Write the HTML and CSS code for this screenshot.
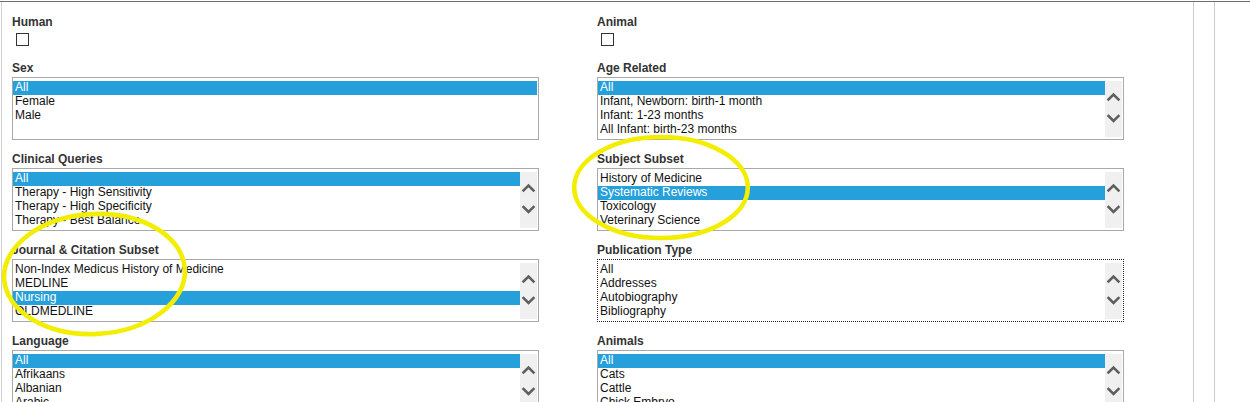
FILE: index.html
```html
<!DOCTYPE html>
<html lang="en">
<head>
<meta charset="utf-8">
<title>Limits</title>
<link rel="stylesheet" href="styles.css">
</head>
<body>
<div class="frame">
  <div class="main">
    <div class="grid">
      <div class="field">
        <span class="label">Human</span>
        <span class="checkbox"></span>
      </div>
      <div class="field">
        <span class="label">Animal</span>
        <span class="checkbox"></span>
      </div>

      <div class="field">
        <span class="label">Sex</span>
        <div class="listbox">
          <ul class="options">
            <li class="opt sel">All</li>
            <li class="opt">Female</li>
            <li class="opt">Male</li>
          </ul>
        </div>
      </div>
      <div class="field">
        <span class="label">Age Related</span>
        <div class="listbox">
          <ul class="options">
            <li class="opt sel">All</li>
            <li class="opt">Infant, Newborn: birth-1 month</li>
            <li class="opt">Infant: 1-23 months</li>
            <li class="opt">All Infant: birth-23 months</li>
          </ul>
          <div class="scrollbar"><svg width="17" height="56" viewBox="0 0 17 56"><path class="chev" d="M3.5 18.5 L8.5 13.5 L13.5 18.5"/><path class="chev" d="M3.5 35 L8.5 40 L13.5 35"/></svg></div>
        </div>
      </div>

      <div class="field">
        <span class="label">Clinical Queries</span>
        <div class="listbox">
          <ul class="options">
            <li class="opt sel">All</li>
            <li class="opt">Therapy - High Sensitivity</li>
            <li class="opt">Therapy - High Specificity</li>
            <li class="opt">Therapy - Best Balance</li>
          </ul>
          <div class="scrollbar"><svg width="17" height="56" viewBox="0 0 17 56"><path class="chev" d="M3.5 18.5 L8.5 13.5 L13.5 18.5"/><path class="chev" d="M3.5 35 L8.5 40 L13.5 35"/></svg></div>
        </div>
      </div>
      <div class="field">
        <span class="label">Subject Subset</span>
        <div class="listbox">
          <ul class="options">
            <li class="opt">History of Medicine</li>
            <li class="opt sel">Systematic Reviews</li>
            <li class="opt">Toxicology</li>
            <li class="opt">Veterinary Science</li>
          </ul>
          <div class="scrollbar"><svg width="17" height="56" viewBox="0 0 17 56"><path class="chev" d="M3.5 18.5 L8.5 13.5 L13.5 18.5"/><path class="chev" d="M3.5 35 L8.5 40 L13.5 35"/></svg></div>
        </div>
      </div>

      <div class="field">
        <span class="label">Journal &amp; Citation Subset</span>
        <div class="listbox">
          <ul class="options">
            <li class="opt">Non-Index Medicus History of Medicine</li>
            <li class="opt">MEDLINE</li>
            <li class="opt sel">Nursing</li>
            <li class="opt">OLDMEDLINE</li>
          </ul>
          <div class="scrollbar"><svg width="17" height="56" viewBox="0 0 17 56"><path class="chev" d="M3.5 18.5 L8.5 13.5 L13.5 18.5"/><path class="chev" d="M3.5 35 L8.5 40 L13.5 35"/></svg></div>
        </div>
      </div>
      <div class="field">
        <span class="label">Publication Type</span>
        <div class="listbox focused">
          <ul class="options">
            <li class="opt">All</li>
            <li class="opt">Addresses</li>
            <li class="opt">Autobiography</li>
            <li class="opt">Bibliography</li>
          </ul>
          <div class="scrollbar"><svg width="17" height="56" viewBox="0 0 17 56"><path class="chev" d="M3.5 18.5 L8.5 13.5 L13.5 18.5"/><path class="chev" d="M3.5 35 L8.5 40 L13.5 35"/></svg></div>
        </div>
      </div>

      <div class="field">
        <span class="label">Language</span>
        <div class="listbox">
          <ul class="options">
            <li class="opt sel">All</li>
            <li class="opt">Afrikaans</li>
            <li class="opt">Albanian</li>
            <li class="opt">Arabic</li>
          </ul>
          <div class="scrollbar"><svg width="17" height="56" viewBox="0 0 17 56"><path class="chev" d="M3.5 18.5 L8.5 13.5 L13.5 18.5"/><path class="chev" d="M3.5 35 L8.5 40 L13.5 35"/></svg></div>
        </div>
      </div>
      <div class="field">
        <span class="label">Animals</span>
        <div class="listbox">
          <ul class="options">
            <li class="opt sel">All</li>
            <li class="opt">Cats</li>
            <li class="opt">Cattle</li>
            <li class="opt">Chick Embryo</li>
          </ul>
          <div class="scrollbar"><svg width="17" height="56" viewBox="0 0 17 56"><path class="chev" d="M3.5 18.5 L8.5 13.5 L13.5 18.5"/><path class="chev" d="M3.5 35 L8.5 40 L13.5 35"/></svg></div>
        </div>
      </div>
    </div>
  </div>
  <div class="gutter"></div>
</div>
<svg class="annotations" width="1250" height="402" viewBox="0 0 1250 402">
  <ellipse class="ring" cx="661" cy="187.5" rx="86.8" ry="50.5"/>
  <ellipse class="ring" cx="94.5" cy="274" rx="90.5" ry="60" transform="rotate(-3 94.5 274)"/>
</svg>
</body>
</html>
```

FILE: styles.css
```css
html, body {
  margin: 0;
  padding: 0;
}

body {
  position: relative;
  width: 1250px;
  height: 402px;
  overflow: hidden;
  background: #ffffff;
  font-family: "Liberation Sans", Arial, sans-serif;
  font-size: 12px;
  color: #000;
}

.frame {
  margin-top: 1px;
  border-top: 1px solid #6e6e6e;
  display: flex;
  height: 400px;
}

.main {
  box-sizing: border-box;
  width: 1193px;
  margin-left: 1px;
  border-left: 1px solid #d0d0d0;
  border-right: 1px solid #cbcbcb;
  padding: 12px 0 0 10px;
  overflow: hidden;
}

.gutter {
  box-sizing: border-box;
  width: 21px;
  border-right: 1px solid #cbcbcb;
}

.grid {
  display: grid;
  grid-template-columns: 527px 527px;
  column-gap: 58px;
  row-gap: 11px;
}

.field {
  display: flex;
  flex-direction: column;
}

.label {
  display: block;
  height: 14px;
  line-height: 16px;
  font-weight: bold;
  color: #333333;
  margin-bottom: 3px;
  white-space: nowrap;
}

.checkbox {
  display: block;
  box-sizing: border-box;
  width: 13px;
  height: 13px;
  border: 1px solid #333333;
  background: #ffffff;
  margin: 2px 0 3px 4px;
}

.listbox {
  box-sizing: border-box;
  width: 527px;
  height: 63px;
  border: 1px solid #a9a9a9;
  padding: 3px 1px 2px 0;
  display: flex;
  overflow: hidden;
  background: #ffffff;
}

.listbox.focused {
  border: 1px dotted #222222;
}

.options {
  flex: 1;
  margin: 0;
  padding: 0;
  list-style: none;
  min-width: 0;
}

.opt {
  height: 14px;
  line-height: 13px;
  padding-left: 2px;
  white-space: nowrap;
  overflow: hidden;
  color: #111111;
}

.opt.sel {
  background: #26a0da;
  color: #ffffff;
}

.scrollbar {
  flex: none;
  width: 17px;
  height: 56px;
  background: #f0f0f0;
}

.scrollbar svg {
  display: block;
}

.chev {
  fill: none;
  stroke: #5f5f5f;
  stroke-width: 2.5;
  stroke-linecap: square;
  stroke-linejoin: miter;
}

.annotations {
  position: absolute;
  left: 0;
  top: 0;
  pointer-events: none;
}

.ring {
  fill: none;
  stroke: #f3ee00;
  stroke-width: 4.6;
}
```
